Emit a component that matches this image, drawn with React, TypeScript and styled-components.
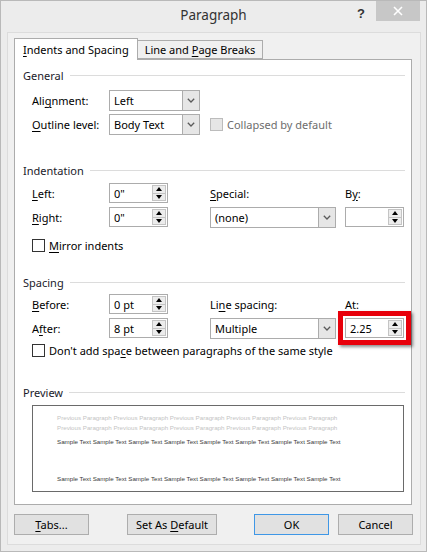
import React from 'react';
import styled, { createGlobalStyle } from 'styled-components';

const GlobalStyle = createGlobalStyle`
  html, body {
    margin: 0;
    padding: 0;
    background: #fff;
  }
  body {
    font-family: 'Noto Sans', 'Liberation Sans', sans-serif;
    font-size: 11px;
    color: #000;
  }
  * {
    box-sizing: border-box;
  }
`;

const Window = styled.div`
  width: 427px;
  height: 552px;
  background: #ececec;
  border: 1px solid #b9b9b9;
  display: flex;
  flex-direction: column;
`;

const TitleBar = styled.div`
  height: 31px;
  display: grid;
  grid-template-columns: 1fr auto 1fr;
  align-items: center;
`;

const Title = styled.div`
  grid-column: 2;
  font-size: 13.5px;
  color: #333;
  padding-bottom: 3px;
`;

const TitleControls = styled.div`
  justify-self: end;
  align-self: start;
  display: flex;
  align-items: flex-start;
`;

const Help = styled.span`
  font-family: 'Liberation Sans', sans-serif;
  font-weight: 700;
  font-size: 13px;
  color: #333;
  margin-top: 5px;
  margin-right: 11px;
`;

const CloseButton = styled.div`
  width: 44px;
  height: 20px;
  margin-right: 6px;
  background: #c7c7c7;
  display: flex;
  align-items: center;
  justify-content: center;
`;

const Client = styled.div`
  flex: 1;
  margin: 0 5px 6px 6px;
  border: 1px solid #dcdcdc;
  background: #f0f0f0;
  padding: 5px 8px 0 6px;
  display: flex;
  flex-direction: column;
`;

const TabStrip = styled.div`
  height: 21px;
  display: flex;
  align-items: flex-end;
`;

const Tab = styled.div<{ $active?: boolean }>`
  display: flex;
  align-items: center;
  border: 1px solid #acacac;
  height: ${p => (p.$active ? '22px' : '19px')};
  padding: ${p => (p.$active ? '0 8px 1px' : '0 7px')};
  background: ${p => (p.$active ? '#fff' : '#f0f0f0')};
  border-bottom: ${p => (p.$active ? 'none' : '1px solid #acacac')};
  border-left: ${p => (p.$active ? '1px solid #acacac' : 'none')};
  margin-bottom: ${p => (p.$active ? '-1px' : '0')};
  position: relative;
  z-index: ${p => (p.$active ? 1 : 0)};
`;

const Panel = styled.div`
  height: 446px;
  border: 1px solid #acacac;
  background: #fff;
  padding: 7px 6px 0 8px;
`;

const Section = styled.div<{ $gap: number }>`
  margin-top: ${p => p.$gap}px;
`;

const SectionHeader = styled.div`
  display: flex;
  align-items: center;
  height: 16px;
  color: #1a1a2a;

  &::after {
    content: '';
    flex: 1;
    height: 1px;
    background: #dcdcdc;
    margin-left: 6px;
  }
`;

const Body = styled.div<{ $gap: number }>`
  padding-left: 9px;
  margin-top: ${p => p.$gap}px;
`;

const FormRow = styled.div`
  display: grid;
  grid-template-columns: 77px 91px auto;
  align-items: center;
  height: 21px;

  & + & {
    margin-top: 3px;
  }
`;

const FieldGrid = styled.div`
  display: grid;
  grid-template-columns: 77px 101px 135px 59px;
  grid-template-rows: 20px 20px;
  row-gap: 4px;
  align-items: center;
`;

const Label = styled.span`
  white-space: nowrap;

  u {
    text-decoration: underline;
    text-underline-offset: 2px;
    text-decoration-thickness: 1px;
  }
`;

const SelectBox = styled.div<{ $width: number }>`
  width: ${p => p.$width}px;
  height: 21px;
  border: 1px solid #acacac;
  background: #fff;
  display: flex;
  align-items: stretch;
`;

const SelectValue = styled.div`
  flex: 1;
  display: flex;
  align-items: center;
  padding-left: 4px;
`;

const SelectArrow = styled.div`
  width: 17px;
  background: #e6e6e6;
  border-left: 1px solid #acacac;
  display: flex;
  align-items: center;
  justify-content: center;
`;

const SpinBox = styled.div`
  width: 59px;
  height: 20px;
  border: 1px solid #acacac;
  background: #fff;
  display: flex;
  align-items: stretch;
`;

const SpinValue = styled.div`
  flex: 1;
  display: flex;
  align-items: center;
  padding-left: 4px;
`;

const SpinButtons = styled.div`
  width: 15px;
  padding: 1px 1px 1px 0;
  display: flex;
  flex-direction: column;
`;

const SpinButton = styled.div<{ $down?: boolean }>`
  flex: 1;
  background: #ececec;
  border: 1px solid #c4c4c4;
  border-top: ${p => (p.$down ? 'none' : '1px solid #c4c4c4')};
  display: flex;
  align-items: center;
  justify-content: center;

  &::before {
    content: '';
    border-left: 3.5px solid transparent;
    border-right: 3.5px solid transparent;
    ${p => (p.$down ? 'border-top: 4px solid #000;' : 'border-bottom: 4px solid #000;')}
  }
`;

const Highlight = styled.div`
  position: relative;
  width: 59px;

  &::after {
    content: '';
    position: absolute;
    inset: -7px;
    border: 5px solid #e8000b;
    box-shadow: 2px 2px 3px rgba(0, 0, 0, 0.45);
    pointer-events: none;
  }
`;

const CheckRow = styled.div<{ $gap?: number; $disabled?: boolean }>`
  display: flex;
  align-items: center;
  gap: 4px;
  height: 13px;
  margin-top: ${p => p.$gap ?? 0}px;
  margin-left: ${p => (p.$disabled ? '10px' : '0')};
  color: ${p => (p.$disabled ? '#6d6d6d' : '#000')};
  white-space: nowrap;

  u {
    text-decoration: underline;
    text-underline-offset: 2px;
  }
`;

const CheckBox = styled.span<{ $disabled?: boolean }>`
  width: 13px;
  height: 13px;
  flex: none;
  border: 1px solid ${p => (p.$disabled ? '#bcbcbc' : '#333')};
  background: ${p => (p.$disabled ? '#e6e6e6' : '#fff')};
`;

const PreviewBox = styled.div`
  margin: 5px 1px 0 9px;
  height: 87px;
  border: 1px solid #6a6a6a;
  background: #fff;
  padding: 7px 0 0 24px;
  font-family: 'Liberation Sans', sans-serif;
  font-size: 6.2px;
  white-space: nowrap;
  overflow: hidden;
`;

const PreviewLine = styled.div<{ $faint?: boolean; $gap?: number }>`
  line-height: 10px;
  height: 10px;
  color: ${p => (p.$faint ? '#c4c4c4' : '#3a3a3a')};
  margin-top: ${p => p.$gap ?? 0}px;
`;

const ButtonRow = styled.div`
  display: flex;
  margin-top: 9px;
  margin-right: -1px;
`;

const Button = styled.div<{ $width: number; $gap?: string; $primary?: boolean }>`
  width: ${p => p.$width}px;
  height: 21px;
  margin-left: ${p => p.$gap ?? '0'};
  background: #e1e1e1;
  border: 1px solid ${p => (p.$primary ? '#3f97e6' : '#adadad')};
  display: flex;
  align-items: center;
  justify-content: center;

  u {
    text-decoration: underline;
    text-underline-offset: 2px;
  }
`;

const Chevron = () => (
  <svg width="8" height="5" viewBox="0 0 8 5">
    <polyline points="0.8,0.8 4,4 7.2,0.8" fill="none" stroke="#5a5a5a" strokeWidth="1.3" />
  </svg>
);

const Select = ({ value, width }: { value: string; width: number }) => (
  <SelectBox $width={width}>
    <SelectValue>{value}</SelectValue>
    <SelectArrow>
      <Chevron />
    </SelectArrow>
  </SelectBox>
);

const Spinner = ({ value }: { value: string }) => (
  <SpinBox>
    <SpinValue>{value}</SpinValue>
    <SpinButtons>
      <SpinButton />
      <SpinButton $down />
    </SpinButtons>
  </SpinBox>
);

const previous = Array(5).fill('Previous Paragraph').join(' ');
const sample = Array(8).fill('Sample Text').join(' ');

const App = () => {
  return (
    <>
      <GlobalStyle />
      <Window>
        <TitleBar>
          <Title>Paragraph</Title>
          <TitleControls>
            <Help>?</Help>
            <CloseButton>
              <svg width="10" height="10" viewBox="0 0 10 10">
                <path d="M1 1 L9 9 M9 1 L1 9" stroke="#fff" strokeWidth="1.6" />
              </svg>
            </CloseButton>
          </TitleControls>
        </TitleBar>

        <Client>
          <TabStrip>
            <Tab $active>
              <Label>
                <u>I</u>ndents and Spacing
              </Label>
            </Tab>
            <Tab>
              <Label>
                Line and <u>P</u>age Breaks
              </Label>
            </Tab>
          </TabStrip>

          <Panel>
            <SectionHeader>General</SectionHeader>
            <Body $gap={7}>
              <FormRow>
                <Label>
                  Ali<u>g</u>nment:
                </Label>
                <Select value="Left" width={91} />
              </FormRow>
              <FormRow>
                <Label>
                  <u>O</u>utline level:
                </Label>
                <Select value="Body Text" width={91} />
                <CheckRow $disabled>
                  <CheckBox $disabled />
                  Collapsed by default
                </CheckRow>
              </FormRow>
            </Body>

            <Section $gap={27}>
              <SectionHeader>Indentation</SectionHeader>
              <Body $gap={5}>
                <FieldGrid>
                  <Label>
                    <u>L</u>eft:
                  </Label>
                  <Spinner value={'0"'} />
                  <Label>
                    <u>S</u>pecial:
                  </Label>
                  <Label>
                    B<u>y</u>:
                  </Label>
                  <Label>
                    <u>R</u>ight:
                  </Label>
                  <Spinner value={'0"'} />
                  <Select value="(none)" width={126} />
                  <Spinner value="" />
                </FieldGrid>
                <CheckRow $gap={12}>
                  <CheckBox />
                  <span>
                    <u>M</u>irror indents
                  </span>
                </CheckRow>
              </Body>
            </Section>

            <Section $gap={22}>
              <SectionHeader>Spacing</SectionHeader>
              <Body $gap={4}>
                <FieldGrid>
                  <Label>
                    <u>B</u>efore:
                  </Label>
                  <Spinner value="0 pt" />
                  <Label>
                    Li<u>n</u>e spacing:
                  </Label>
                  <Label>
                    <u>A</u>t:
                  </Label>
                  <Label>
                    A<u>f</u>ter:
                  </Label>
                  <Spinner value="8 pt" />
                  <Select value="Multiple" width={126} />
                  <Highlight>
                    <Spinner value="2.25" />
                  </Highlight>
                </FieldGrid>
                <CheckRow $gap={6}>
                  <CheckBox />
                  <span>
                    Don't add spa<u>c</u>e between paragraphs of the same style
                  </span>
                </CheckRow>
              </Body>
            </Section>

            <Section $gap={27}>
              <SectionHeader>Preview</SectionHeader>
              <PreviewBox>
                <PreviewLine $faint>{previous}</PreviewLine>
                <PreviewLine $faint>{previous}</PreviewLine>
                <PreviewLine $gap={4}>{sample}</PreviewLine>
                <PreviewLine $gap={27}>{sample}</PreviewLine>
              </PreviewBox>
            </Section>
          </Panel>

          <ButtonRow>
            <Button $width={75}>
              <span>
                <u>T</u>abs...
              </span>
            </Button>
            <Button $width={90} $gap="38px">
              <span>
                Set As <u>D</u>efault
              </span>
            </Button>
            <Button $width={75} $gap="auto" $primary>
              OK
            </Button>
            <Button $width={75} $gap="9px">
              Cancel
            </Button>
          </ButtonRow>
        </Client>
      </Window>
    </>
  );
};

export default App;
